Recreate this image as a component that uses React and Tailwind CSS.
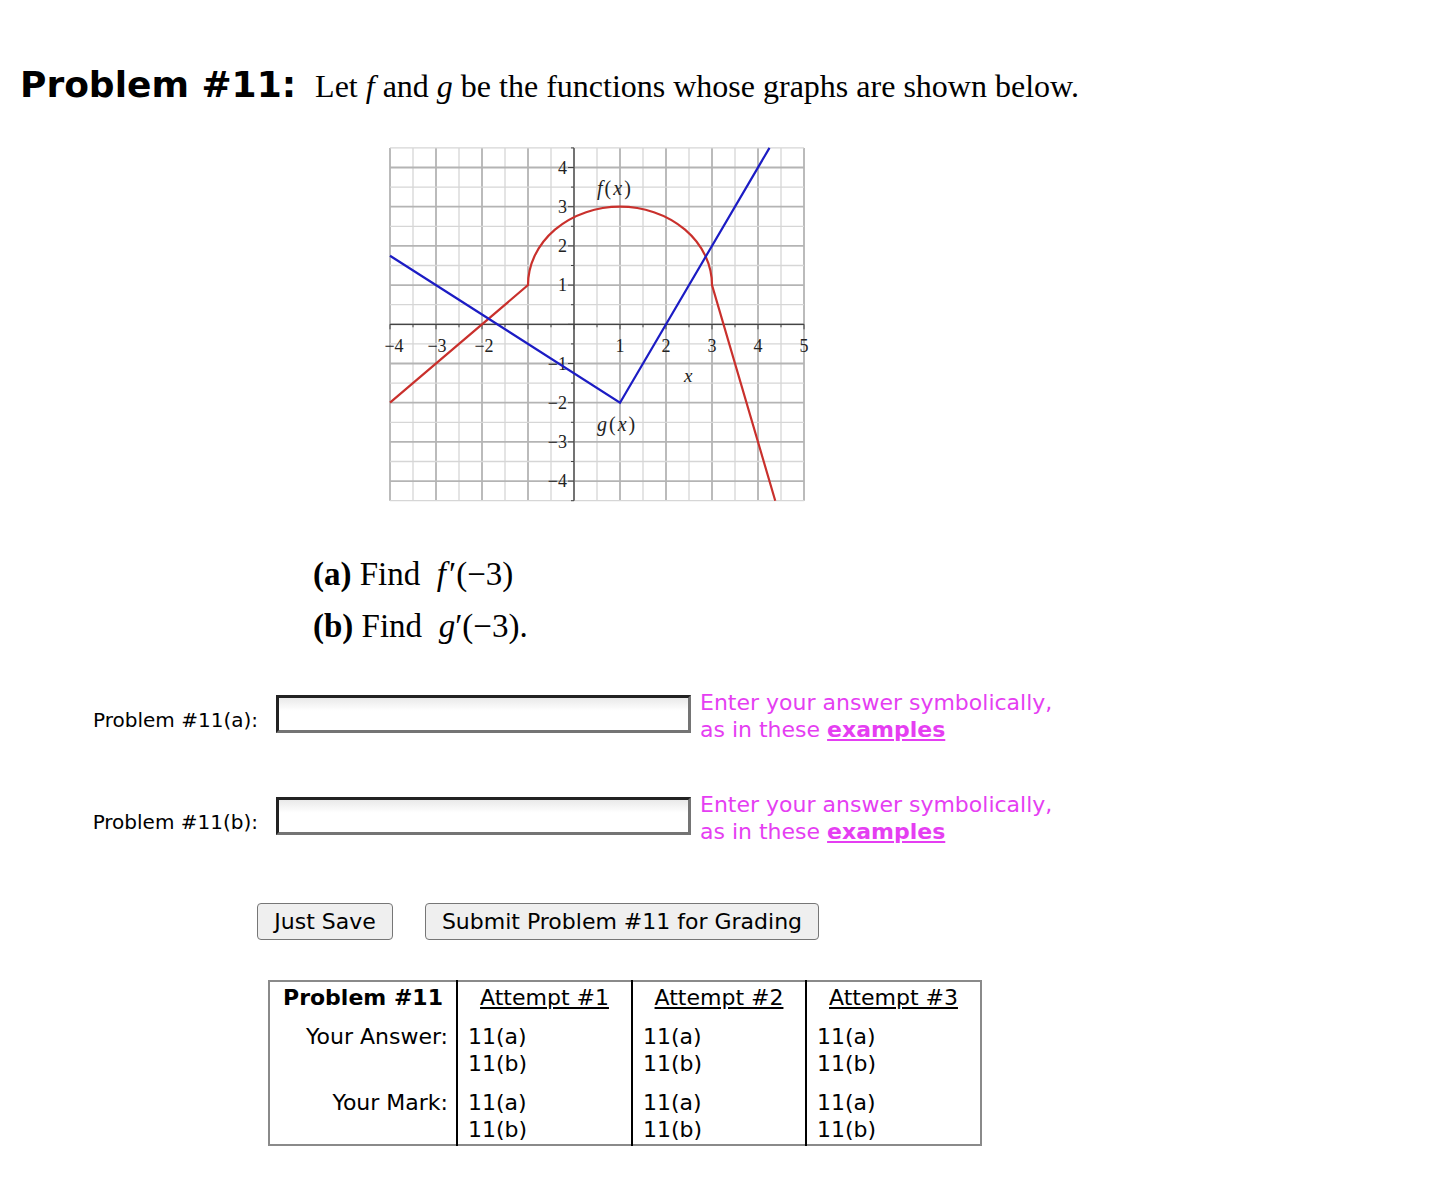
import React from "react";

const OFF = 375;
const X = (u) => 390 - OFF + (u + 4) * 46;
const Y = (v) => 183.3 - v * 39.2;

function Graph() {
  const halves = [];
  for (let i = 0; i <= 18; i++) halves.push(i / 2);
  const vLines = halves.map((h) => -4 + h);
  const hLines = halves.map((h) => -4.5 + h);
  const xLabels = [
    [-4, "−4", 394],
    [-3, "−3", 437],
    [-2, "−2", 484],
    [1, "1", 620],
    [2, "2", 666],
    [3, "3", 712],
    [4, "4", 758],
    [5, "5", 804],
  ];
  const yLabels = [4, 3, 2, 1, -1, -2, -3, -4];
  return (
    <svg width="445" height="365" viewBox="0 0 445 365" className="block">
      {vLines.map((u) => (
        <line
          key={"v" + u}
          x1={X(u)}
          x2={X(u)}
          y1={Y(4.5)}
          y2={Y(-4.5)}
          stroke={Number.isInteger(u) ? "#b4b4b4" : "#d6d6d6"}
          strokeWidth={Number.isInteger(u) ? 1.8 : 1.3}
        />
      ))}
      {hLines.map((v) => (
        <line
          key={"h" + v}
          x1={X(-4)}
          x2={X(5)}
          y1={Y(v)}
          y2={Y(v)}
          stroke={Number.isInteger(v) ? "#b4b4b4" : "#d6d6d6"}
          strokeWidth={Number.isInteger(v) ? 1.8 : 1.3}
        />
      ))}
      <line x1={X(-4)} x2={X(5)} y1={Y(0)} y2={Y(0)} stroke="#444" strokeWidth="1.2" />
      <line x1={X(0)} x2={X(0)} y1={Y(4.5)} y2={Y(-4.5)} stroke="#444" strokeWidth="1.2" />
      {vLines.map((u) => (
        <line
          key={"tx" + u}
          x1={X(u)}
          x2={X(u)}
          y1={Y(0)}
          y2={Y(0) + (Number.isInteger(u) ? 5 : 3)}
          stroke="#444"
          strokeWidth="1"
        />
      ))}
      {hLines.map((v) => (
        <line
          key={"ty" + v}
          x1={X(0) - (Number.isInteger(v) ? 6 : 3)}
          x2={X(0)}
          y1={Y(v)}
          y2={Y(v)}
          stroke="#444"
          strokeWidth="1"
        />
      ))}
      <g fontFamily="'Liberation Serif', serif" fontSize="18" fill="#222">
        {xLabels.map(([u, t, px]) => (
          <text key={"xl" + u} x={px - OFF} y={211} textAnchor="middle">
            {t}
          </text>
        ))}
        {yLabels.map((v) => (
          <text key={"yl" + v} x={X(0) - 7} y={Y(v) + 6} textAnchor="end">
            {v < 0 ? "−" + -v : v}
          </text>
        ))}
        <text x={597 - OFF} y="54" fontSize="20" letterSpacing="2">
          <tspan fontStyle="italic">f</tspan>(<tspan fontStyle="italic">x</tspan>)
        </text>
        <text x={597 - OFF} y="290" fontSize="20" letterSpacing="2">
          <tspan fontStyle="italic">g</tspan>(<tspan fontStyle="italic">x</tspan>)
        </text>
        <text x={684 - OFF} y="241" fontStyle="italic" fontSize="19">
          x
        </text>
      </g>
      <path
        d={`M ${X(-4)} ${Y(-2)} L ${X(-1)} ${Y(1)} A 92 78.4 0 0 1 ${X(3)} ${Y(1)} L ${X(4.375)} ${Y(-4.5)}`}
        fill="none"
        stroke="#c9302c"
        strokeWidth="2.2"
      />
      <path
        d={`M ${X(-4)} ${Y(1.75)} L ${X(1)} ${Y(-2)} L ${X(4.25)} ${Y(4.5)}`}
        fill="none"
        stroke="#1c1cc4"
        strokeWidth="2.2"
      />
    </svg>
  );
}

function AnswerRow({ label, className }) {
  return (
    <div className={"flex items-start " + className}>
      <div className="w-[258px] text-right text-[20px] leading-[24px] pt-[13px] text-black">
        {label}
      </div>
      <div className="ml-[18px] w-[415px] h-[38px] border-[3px] border-t-[#222] border-l-[#222] border-b-[#747474] border-r-[#747474] bg-gradient-to-b from-[#e9e9e9] to-white to-[40%]"></div>
      <div className="ml-[9px] text-[22px] leading-[27px] text-[#e53ef2] -mt-[6px]">
        <div>Enter your answer symbolically,</div>
        <div>
          as in these <span className="font-bold underline">examples</span>
        </div>
      </div>
    </div>
  );
}

export default function App() {
  const serif = { fontFamily: "'Liberation Serif', serif" };
  return (
    <div
      className="w-[1448px] min-h-[1186px] bg-white text-black"
      style={{ fontFamily: "'DejaVu Sans', Verdana, sans-serif" }}
    >
      <div className="pt-[63px] pl-[20px] flex items-baseline">
        <span className="font-bold text-[36px] leading-[44px]">Problem #11:</span>
        <span className="ml-[19px] text-[32px] leading-[44px]" style={serif}>
          Let <i>f</i> and <i>g</i> be the functions whose graphs are shown below.
        </span>
      </div>

      <div className="mt-[33px] ml-[375px]">
        <Graph />
      </div>

      <div className="mt-[42px] ml-[313px] text-[33px] leading-[52px]" style={serif}>
        <div>
          <b>(a)</b> Find&nbsp; <i className="mr-[3px]">f</i>′(−3)
        </div>
        <div>
          <b>(b)</b> Find&nbsp; <i>g</i>′(−3).
        </div>
      </div>

      <AnswerRow label="Problem #11(a):" className="mt-[43px]" />
      <AnswerRow label="Problem #11(b):" className="mt-[54px]" />

      <div className="mt-[58px] ml-[257px] flex gap-[32px]">
        <button className="w-[136px] h-[37px] bg-[#efefef] border-[1.5px] border-[#767676] rounded-[4px] text-[22px] leading-[24px] text-black">
          Just Save
        </button>
        <button className="w-[394px] h-[37px] bg-[#efefef] border-[1.5px] border-[#767676] rounded-[4px] text-[22px] leading-[24px] text-black">
          Submit Problem #11 for Grading
        </button>
      </div>

      <table className="mt-[40px] ml-[268px] border-collapse border-2 border-[#8a8a8a] text-[22px] leading-[27px]">
        <tbody>
          <tr>
            <td className="w-[188px] text-center font-bold pt-[2px] pb-[12px]">Problem #11</td>
            <td className="w-[175px] text-center border-l-2 border-l-black pt-[2px] pb-[12px]">
              <span className="underline">Attempt #1</span>
            </td>
            <td className="w-[174px] text-center border-l-2 border-l-black pt-[2px] pb-[12px]">
              <span className="underline">Attempt #2</span>
            </td>
            <td className="w-[175px] text-center border-l-2 border-l-black pt-[2px] pb-[12px]">
              <span className="underline">Attempt #3</span>
            </td>
          </tr>
          <tr>
            <td className="text-right align-top pr-[8px] pb-[12px]">Your Answer:</td>
            {[1, 2, 3].map((i) => (
              <td key={i} className="align-top border-l-2 border-l-black pl-[10px] pb-[12px]">
                <div>11(a)</div>
                <div>11(b)</div>
              </td>
            ))}
          </tr>
          <tr>
            <td className="text-right align-top pr-[8px] pb-[1px]">Your Mark:</td>
            {[1, 2, 3].map((i) => (
              <td key={i} className="align-top border-l-2 border-l-black pl-[10px] pb-[1px]">
                <div>11(a)</div>
                <div>11(b)</div>
              </td>
            ))}
          </tr>
        </tbody>
      </table>
    </div>
  );
}
